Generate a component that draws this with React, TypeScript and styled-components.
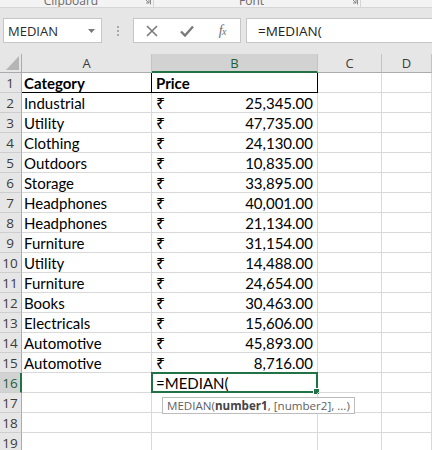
import React from "react";
import styled, { createGlobalStyle } from "styled-components";

const GlobalStyle = createGlobalStyle`
  html, body { margin: 0; padding: 0; background: #ffffff; overflow: hidden; }
  #root { width: 432px; height: 450px; }
`;

const UI_FONT = `"Open Sans", "Noto Sans", "DejaVu Sans", sans-serif`;
const CELL_FONT = `Lato, "Liberation Sans", sans-serif`;
const GREEN = "#217346";

const Window = styled.div`
  width: 432px;
  height: 450px;
  overflow: hidden;
  display: flex;
  flex-direction: column;
  background: #ffffff;
`;

const RibbonStrip = styled.div`
  flex: none;
  height: 7px;
  display: flex;
  overflow: hidden;
  background: #f3f3f3;
  border-bottom: 1px solid #d6d6d6;
`;

const RibbonGroup = styled.div<{ $w: number }>`
  flex: none;
  width: ${(p) => p.$w}px;
  display: flex;
  align-items: flex-end;
  border-right: 1px solid #d6d6d6;
  padding-right: 2px;
  box-sizing: border-box;
`;

const GroupLabel = styled.div`
  flex: 1;
  text-align: center;
  font-family: ${UI_FONT};
  font-size: 12px;
  line-height: 15px;
  color: #6a6a6a;
  margin-bottom: -1px;
`;

const Launcher = styled.svg`
  flex: none;
  width: 9px;
  height: 9px;
  margin-bottom: 2px;
`;

const FormulaBar = styled.div`
  flex: none;
  height: 46px;
  box-sizing: border-box;
  padding-top: 10px;
  display: flex;
  align-items: flex-start;
  background: #e6e6e6;
`;

const NameBox = styled.div`
  flex: none;
  margin-left: 3px;
  width: 99px;
  height: 25px;
  box-sizing: border-box;
  background: #ffffff;
  border: 1px solid #c6c6c6;
  display: flex;
  align-items: center;
  justify-content: space-between;
  padding: 0 6px 0 4px;
  font-family: ${UI_FONT};
  font-size: 13px;
  color: #2b2b2b;
`;

const Caret = styled.svg`
  width: 7px;
  height: 4px;
`;

const Grip = styled.div`
  flex: none;
  width: 31px;
  height: 25px;
  display: flex;
  flex-direction: column;
  align-items: center;
  justify-content: center;
  gap: 2px;
`;

const GripDot = styled.span`
  width: 2px;
  height: 2px;
  background: #a8a8a8;
`;

const ButtonBox = styled.div`
  flex: none;
  width: 108px;
  height: 25px;
  box-sizing: border-box;
  background: #ffffff;
  border: 1px solid #c6c6c6;
  display: flex;
  align-items: center;
`;

const IconSlot = styled.div`
  flex: 1;
  height: 100%;
  display: flex;
  align-items: center;
  justify-content: center;
  color: #7a7a7a;
`;

const FxText = styled.span`
  font-family: "Liberation Serif", "DejaVu Serif", serif;
  font-style: italic;
  font-size: 14px;
  color: #6f6f6f;
  letter-spacing: -0.5px;
  & > small {
    font-size: 10px;
  }
`;

const FormulaInput = styled.div`
  flex: 1;
  margin-left: 5px;
  height: 25px;
  box-sizing: border-box;
  background: #ffffff;
  border: 1px solid #c6c6c6;
  border-right: none;
  display: flex;
  align-items: center;
  padding-left: 11px;
  font-family: ${UI_FONT};
  font-size: 13.5px;
  color: #222222;
`;

const Sheet = styled.div`
  flex: none;
  display: grid;
  grid-template-columns: 22px 130px 166px 64px 1fr;
  grid-template-rows: 19px;
  grid-auto-rows: 20px;
  background: #ffffff;
`;

const Corner = styled.div`
  background: #e6e6e6;
  border-right: 1px solid #ababab;
  border-bottom: 1px solid #ababab;
  box-sizing: border-box;
  display: flex;
  align-items: flex-end;
  justify-content: flex-end;
  padding: 0 2px 2px 0;
`;

const ColHeader = styled.div<{ $sel?: boolean }>`
  box-sizing: border-box;
  background: ${(p) => (p.$sel ? "#d2d2d2" : "#e6e6e6")};
  border-right: 1px solid #c4c4c4;
  border-bottom: ${(p) => (p.$sel ? `2px solid ${GREEN}` : "1px solid #ababab")};
  display: flex;
  align-items: center;
  justify-content: center;
  font-family: ${UI_FONT};
  font-size: 13px;
  color: ${(p) => (p.$sel ? "#1d5e3c" : "#3c3c3c")};
  padding-top: ${(p) => (p.$sel ? "1px" : "0")};
`;

const RowHeader = styled.div<{ $sel?: boolean }>`
  box-sizing: border-box;
  background: ${(p) => (p.$sel ? "#d2d2d2" : "#e6e6e6")};
  border-right: ${(p) => (p.$sel ? `2px solid ${GREEN}` : "1px solid #ababab")};
  border-bottom: 1px solid #cdcdcd;
  display: flex;
  align-items: center;
  justify-content: center;
  font-family: ${UI_FONT};
  font-size: 13.5px;
  color: ${(p) => (p.$sel ? "#1d5e3c" : "#3c3c3c")};
  padding-right: ${(p) => (p.$sel ? "0" : "1px")};
`;

const Cell = styled.div<{ $bold?: boolean; $boxed?: boolean; $underline?: boolean }>`
  position: relative;
  box-sizing: border-box;
  border-right: 1px solid ${(p) => (p.$boxed ? "#000000" : "#d9d9d9")};
  border-bottom: 1px solid ${(p) => (p.$boxed || p.$underline ? "#000000" : "#d9d9d9")};
  box-shadow: ${(p) => (p.$boxed ? "-1px 0 0 #000000" : "none")};
  display: flex;
  align-items: flex-end;
  justify-content: space-between;
  padding: 0 4px 0 2px;
  font-family: ${CELL_FONT};
  font-size: 15px;
  line-height: 18px;
  font-weight: ${(p) => (p.$bold ? 700 : 400)};
  color: #000000;
  white-space: nowrap;
`;

const PriceCell = styled(Cell)`
  padding-left: 4px;
`;

const Rupee = styled.span`
  font-family: "Noto Sans", "DejaVu Sans", sans-serif;
  font-size: 16px;
  line-height: 18px;
`;

const SelectionFrame = styled.div`
  position: absolute;
  top: -1px;
  left: -1px;
  right: -1px;
  bottom: -1px;
  border: 2px solid ${GREEN};
  pointer-events: none;
`;

const FillHandle = styled.div`
  position: absolute;
  right: -3px;
  bottom: -3px;
  width: 5px;
  height: 5px;
  background: ${GREEN};
  border: 1px solid #ffffff;
`;

const Tooltip = styled.div`
  position: absolute;
  z-index: 3;
  top: 24px;
  left: 10px;
  height: 17px;
  box-sizing: border-box;
  padding: 0 4px;
  display: flex;
  align-items: center;
  background: #ffffff;
  border: 1px solid #bcbcbc;
  font-family: ${UI_FONT};
  font-size: 11.6px;
  color: #5f5f5f;
  white-space: nowrap;
  & > b {
    color: #444444;
    font-weight: 700;
    white-space: pre;
  }
`;

const rows: [string, string][] = [
  ["Industrial", "25,345.00"],
  ["Utility", "47,735.00"],
  ["Clothing", "24,130.00"],
  ["Outdoors", "10,835.00"],
  ["Storage", "33,895.00"],
  ["Headphones", "40,001.00"],
  ["Headphones", "21,134.00"],
  ["Furniture", "31,154.00"],
  ["Utility", "14,488.00"],
  ["Furniture", "24,654.00"],
  ["Books", "30,463.00"],
  ["Electricals", "15,606.00"],
  ["Automotive", "45,893.00"],
  ["Automotive", "8,716.00"],
];

function LauncherIcon() {
  return (
    <Launcher viewBox="0 0 9 9">
      <path d="M0.5 0.5 H8.5 V8.5" fill="none" stroke="#8a8a8a" strokeWidth="1" />
      <path d="M3 3 L7 7 M4 7 H7 V4" fill="none" stroke="#8a8a8a" strokeWidth="1" />
    </Launcher>
  );
}

export default function App() {
  return (
    <Window>
      <GlobalStyle />
      <RibbonStrip>
        <RibbonGroup $w={154}>
          <GroupLabel>Clipboard</GroupLabel>
          <LauncherIcon />
        </RibbonGroup>
        <RibbonGroup $w={207}>
          <GroupLabel>Font</GroupLabel>
          <LauncherIcon />
        </RibbonGroup>
      </RibbonStrip>

      <FormulaBar>
        <NameBox>
          <span>MEDIAN</span>
          <Caret viewBox="0 0 7 4">
            <path d="M0 0 H7 L3.5 4 Z" fill="#7a7a7a" />
          </Caret>
        </NameBox>
        <Grip>
          <GripDot />
          <GripDot />
          <GripDot />
        </Grip>
        <ButtonBox>
          <IconSlot>
            <svg width="12" height="12" viewBox="0 0 12 12">
              <path d="M1 1 L11 11 M11 1 L1 11" stroke="#7a7a7a" strokeWidth="1.6" fill="none" />
            </svg>
          </IconSlot>
          <IconSlot>
            <svg width="14" height="12" viewBox="0 0 14 12">
              <path d="M1 6.5 L5 10.5 L13 1.5" stroke="#7a7a7a" strokeWidth="2.4" fill="none" />
            </svg>
          </IconSlot>
          <IconSlot>
            <FxText>
              f<small>x</small>
            </FxText>
          </IconSlot>
        </ButtonBox>
        <FormulaInput>=MEDIAN(</FormulaInput>
      </FormulaBar>

      <Sheet>
        <Corner>
          <svg width="13" height="14" viewBox="0 0 13 14">
            <path d="M13 0 V14 H0 Z" fill="#b5b5b5" />
          </svg>
        </Corner>
        <ColHeader>A</ColHeader>
        <ColHeader $sel>B</ColHeader>
        <ColHeader>C</ColHeader>
        <ColHeader>D</ColHeader>

        <RowHeader>1</RowHeader>
        <Cell $bold $underline>Category</Cell>
        <PriceCell $bold $boxed>Price</PriceCell>
        <Cell />
        <Cell />

        {rows.map(([cat, price], i) => (
          <React.Fragment key={i}>
            <RowHeader>{i + 2}</RowHeader>
            <Cell>{cat}</Cell>
            <PriceCell>
              <Rupee>₹</Rupee>
              <span>{price}</span>
            </PriceCell>
            <Cell />
            <Cell />
          </React.Fragment>
        ))}

        <RowHeader $sel>16</RowHeader>
        <Cell />
        <PriceCell>
          <span>=MEDIAN(</span>
          <SelectionFrame />
          <FillHandle />
          <Tooltip>
            MEDIAN(<b>number1</b>, [number2], ...)
          </Tooltip>
        </PriceCell>
        <Cell />
        <Cell />

        {[17, 18, 19].map((n) => (
          <React.Fragment key={n}>
            <RowHeader>{n}</RowHeader>
            <Cell />
            <Cell />
            <Cell />
            <Cell />
          </React.Fragment>
        ))}
      </Sheet>
    </Window>
  );
}
